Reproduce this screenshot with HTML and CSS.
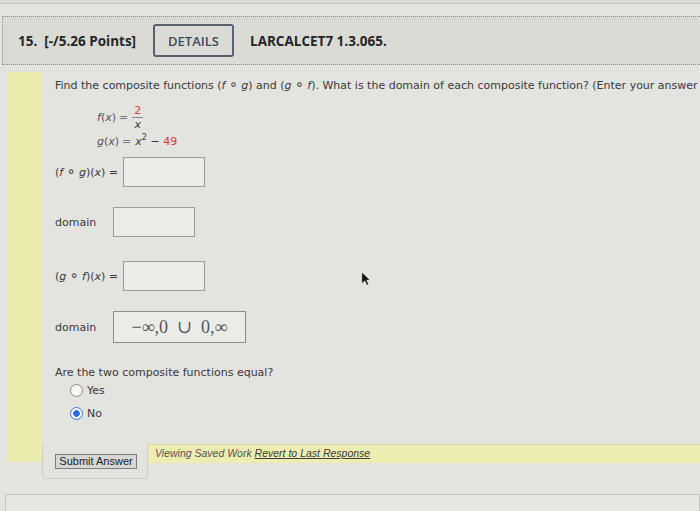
FILE: index.html
```html
<!DOCTYPE html>
<html>
<head>
<meta charset="utf-8">
<link rel="stylesheet" href="styles.css">
</head>
<body>
<div class="topbar"></div>
<div class="question">
  <div class="qhead">
    <span class="qnum">15.&nbsp; [-/5.26 Points]</span>
    <span class="details">DETAILS</span>
    <span class="qref">LARCALCET7 1.3.065.</span>
  </div>
  <div class="qbody">
    <div class="stripe"></div>
    <div class="content">
      <p class="prompt">Find the composite functions (<i>f</i> <span class="o">∘</span> <i>g</i>) and (<i>g</i> <span class="o">∘</span> <i>f</i>). What is the domain of each composite function? (Enter your answer</p>
      <div class="given">
        <div class="frow">
          <span class="fn"><i>f</i>(<i>x</i>)</span><span class="eq">=</span>
          <span class="frac"><span class="num red">2</span><span class="den"><i>x</i></span></span>
        </div>
        <div class="frow grow">
          <span class="fn"><i>g</i>(<i>x</i>)</span><span class="eq">=</span>
          <span><i>x</i><sup>2</sup> − <span class="red">49</span></span>
        </div>
      </div>
      <div class="arow r1"><span class="lab">(<i>f</i> <span class="o">∘</span> <i>g</i>)(<i>x</i>) =</span><span class="box"></span></div>
      <div class="arow r2"><span class="lab dom">domain</span><span class="box"></span></div>
      <div class="arow r3"><span class="lab">(<i>g</i> <span class="o">∘</span> <i>f</i>)(<i>x</i>) =</span><span class="box"></span></div>
      <div class="arow r4"><span class="lab dom">domain</span><span class="box answer">−∞,0 &nbsp;∪&nbsp; 0,∞</span></div>
      <p class="ask">Are the two composite functions equal?</p>
      <div class="opt opt-yes"><span class="radio"></span><span>Yes</span></div>
      <div class="opt opt-no"><span class="radio on"></span><span>No</span></div>
      <div class="footer">
        <div class="submitbox"><span class="submit">Submit Answer</span></div>
        <div class="saved"><i>Viewing Saved Work <u>Revert to Last Response</u></i></div>
      </div>
    </div>
  </div>
</div>
<div class="nextq"></div>
<svg class="cursor" width="10" height="14" viewBox="0 0 11 18"><path d="M0 0 L0 15 L4 11.5 L6.5 17 L9 16 L6.5 10.5 L11 10.5 Z" fill="#111" stroke="#fff" stroke-width="0.8"/></svg>
</body>
</html>
```

FILE: styles.css
```css
html, body {
  margin: 0;
  padding: 0;
}
body {
  width: 700px;
  height: 511px;
  overflow: hidden;
  background: #e3e3df;
  font-family: "DejaVu Sans", Verdana, sans-serif;
  font-size: 11px;
  color: #3a3a3a;
  position: relative;
}
.topbar {
  height: 3px;
  background: #dadad6;
  border-bottom: 1px solid #c4c4c0;
}
.question {
  margin-top: 12px;
}
.qhead {
  margin-left: 2px;
  height: 47px;
  border-top: 1px dotted #8d8d8d;
  border-bottom: 1px dotted #8d8d8d;
  border-left: 1px dotted #8d8d8d;
  background: #dbdbd6;
  display: flex;
  align-items: center;
  padding-left: 15px;
  font-family: "Open Sans", sans-serif;
  font-size: 13.5px;
  color: #262626;
}
.qnum {
  font-weight: bold;
  width: 135px;
}
.details {
  box-sizing: border-box;
  width: 81px;
  height: 33px;
  border: 2px solid #5a6070;
  border-radius: 3px;
  display: flex;
  align-items: center;
  justify-content: center;
  color: #3d4a5c;
  font-weight: 600;
  font-size: 13px;
  margin-right: 16px;
}
.qref {
  font-weight: bold;
}
.qbody {
  display: flex;
  margin-top: 7px;
  margin-left: 8px;
}
.stripe {
  width: 34px;
  height: 390px;
  background: #ecebae;
  flex: none;
}
.content {
  flex: 1;
  min-width: 0;
}
.o {
  font-size: 14px;
  line-height: 10px;
}
.prompt {
  margin: 6px 0 0 13px;
  line-height: 16px;
  white-space: nowrap;
}
.given {
  margin: 10px 0 0 55px;
}
.frow {
  display: flex;
  align-items: center;
  height: 27px;
}
.frow.grow {
  height: 16px;
  margin-top: 2px;
}
.fn {
  flex: none;
  color: #555;
}
.eq {
  margin: 0 4px 0 3px;
  color: #777;
}
.frac {
  display: inline-flex;
  flex-direction: column;
  align-items: center;
}
.num {
  line-height: 13px;
  border-bottom: 1px solid #888;
  padding: 0 2px;
}
.den {
  line-height: 13px;
}
.red {
  color: #d23c3c;
}
sup {
  font-size: 8px;
  line-height: 0;
  vertical-align: 5px;
}
.arow {
  display: flex;
  align-items: center;
  margin-left: 13px;
}
.r1 { margin-top: 8px; }
.r2 { margin-top: 20px; }
.r3 { margin-top: 24px; }
.r4 { margin-top: 20px; }
.lab {
  width: 68px;
}
.lab.dom {
  width: 58px;
}
.box {
  box-sizing: border-box;
  width: 82px;
  height: 30px;
  border: 1px solid #9c9c9a;
  background: #ebebe7;
}
.box.answer {
  width: 133px;
  height: 32px;
  border-color: #8e8e8c;
  display: flex;
  align-items: center;
  justify-content: center;
  font-family: "Liberation Serif", "DejaVu Serif", serif;
  font-size: 18px;
  color: #555;
}
.ask {
  margin: 22px 0 0 13px;
  line-height: 16px;
}
.opt {
  display: flex;
  align-items: center;
  margin-left: 28px;
  height: 16px;
  gap: 4px;
}
.opt-yes { margin-top: 1px; }
.opt-no { margin-top: 7px; }
.radio {
  box-sizing: border-box;
  width: 13px;
  height: 13px;
  border-radius: 50%;
  border: 1px solid #8a8a8a;
  background: #f6f6f4;
}
.radio.on {
  border: 1px solid #3b78d8;
  background: radial-gradient(circle, #2a6ae0 0 3px, #f6f6f4 3.5px);
}
.footer {
  display: flex;
  align-items: flex-start;
  margin-top: 23px;
}
.submitbox {
  box-sizing: border-box;
  width: 106px;
  padding: 10px 0 9px 12px;
  border: 1px solid #cdcdc9;
  border-top: none;
  border-radius: 0 0 4px 4px;
  flex: none;
}
.submit {
  display: block;
  box-sizing: border-box;
  width: 82px;
  height: 15px;
  border: 1px solid #7d7d7d;
  background: #d7d7d3;
  font-family: "Liberation Sans", Arial, sans-serif;
  font-size: 11px;
  line-height: 13px;
  text-align: center;
  color: #222;
}
.saved {
  flex: 1;
  height: 18px;
  background: #ededb1;
  border-top: 1px solid #d8d8a0;
  font-family: "Liberation Sans", Arial, sans-serif;
  font-size: 10.5px;
  line-height: 16px;
  padding-left: 7px;
  color: #555;
  white-space: nowrap;
}
.saved u {
  color: #3a3a3a;
}
.nextq {
  margin: 15px 0 0 5px;
  height: 40px;
  border: 1px solid #c6c6c2;
  background: #e6e6e2;
}
.cursor {
  position: absolute;
  left: 361px;
  top: 272px;
}
```
